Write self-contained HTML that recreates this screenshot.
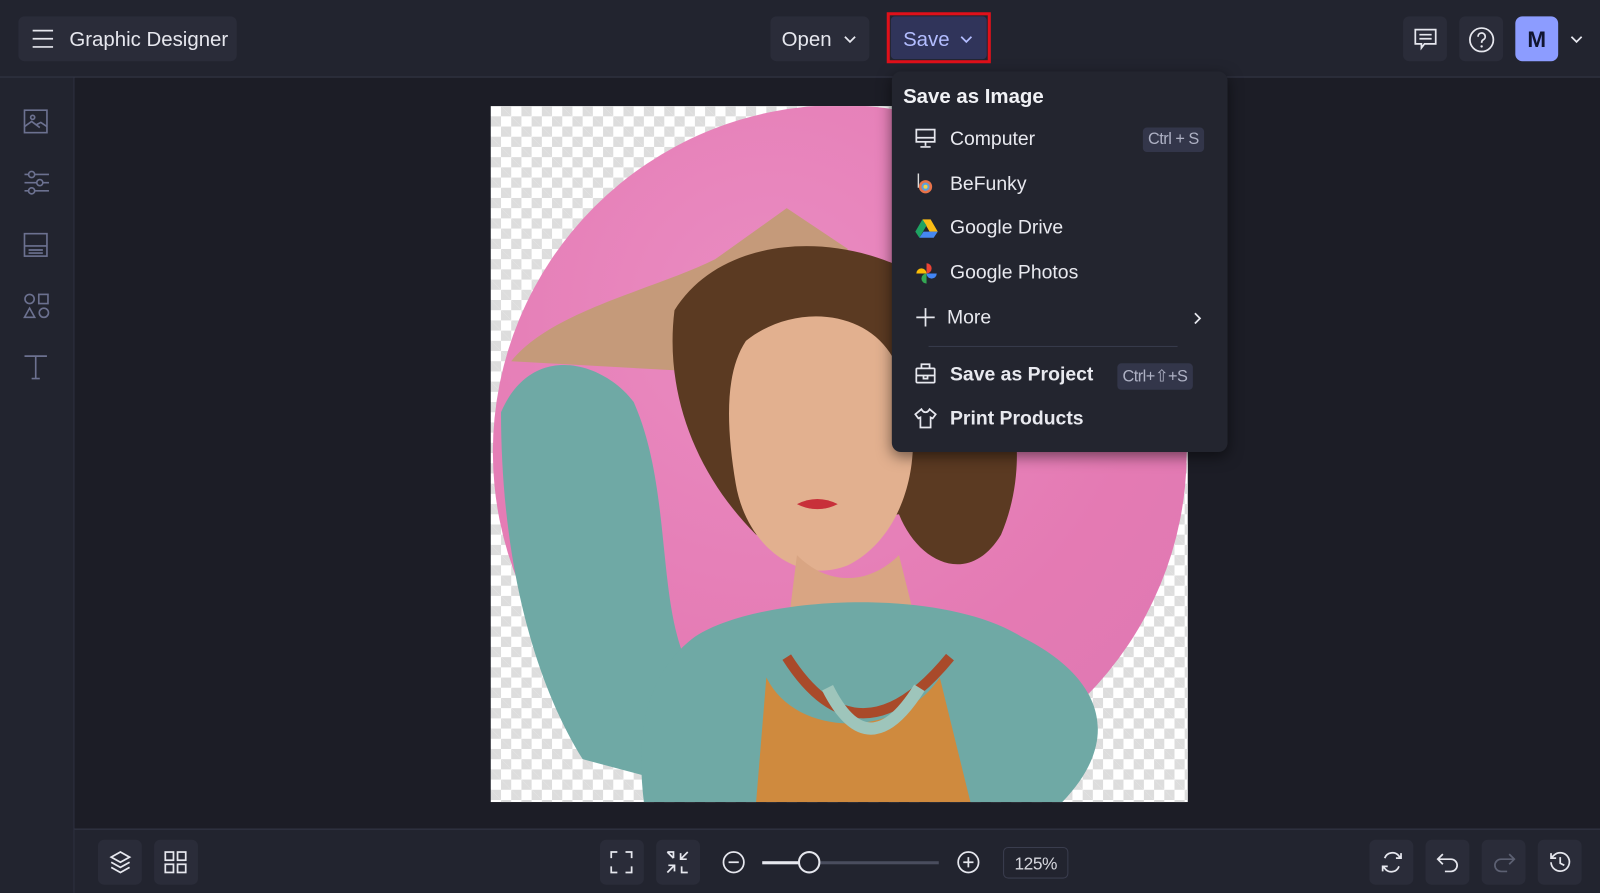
<!DOCTYPE html>
<html><head><meta charset="utf-8"><style>
*{box-sizing:border-box;margin:0;padding:0}
html,body{width:1600px;height:893px;overflow:hidden;background:#1c1d26;font-family:"Liberation Sans",sans-serif}
#w{position:absolute;left:0;top:0;width:1568px;height:875px;transform:scale(1.02041);transform-origin:0 0;background:#1c1d26}
.a{position:absolute}
.btn{position:absolute;background:#2a2c39;border-radius:6px}
svg{position:absolute}
.ic{stroke:#6c7190;fill:none;stroke-width:1.6}
.wi{stroke:#e6e7ee;fill:none;stroke-width:1.7}
.mi{position:absolute;left:57px;color:#e8e9ef;font-size:19px}
.kbd{position:absolute;background:#33364a;color:#aeb1c4;font-size:16px;border-radius:4px;padding:3px 5px;letter-spacing:-0.5px}
</style></head><body><div id="w">
<div class="a" style="left:0;top:0;width:1568px;height:76px;background:#22242f;border-bottom:1px solid #353848"></div>
<div class="a" style="left:0;top:76px;width:73px;height:799px;background:#22242f;border-right:1px solid #2e3140"></div>
<div class="a" style="left:73px;top:812px;width:1495px;height:63px;background:#22242f;border-top:1px solid #353848"></div>

<div class="btn" style="left:18px;top:16px;width:214px;height:44px"></div>
<svg style="left:30px;top:28px" width="24" height="20"><path class="wi" d="M2 2h20M2 10h20M2 18h20"/></svg>
<div class="a" style="left:68px;top:28px;color:#e6e7ee;font-size:20px">Graphic Designer</div>

<div class="btn" style="left:755px;top:16px;width:97px;height:44px"></div>
<div class="a" style="left:766px;top:28px;color:#e6e7ee;font-size:20px">Open</div>
<svg style="left:826px;top:34px" width="14" height="10"><path class="wi" d="M2 2l5 5 5-5"/></svg>
<div class="a" style="left:869px;top:12px;width:102px;height:50px;border:3px solid #e0101a;background:#22242f"></div>
<div class="a" style="left:873px;top:16px;width:94px;height:42px;background:#30345a;border-radius:4px"></div>
<div class="a" style="left:885px;top:28px;color:#b3bdff;font-size:20px">Save</div>
<svg style="left:940px;top:34px" width="14" height="10"><path stroke="#b3bdff" fill="none" stroke-width="1.7" d="M2 2l5 5 5-5"/></svg>

<div class="btn" style="left:1375px;top:16px;width:43px;height:44px"></div>
<svg style="left:1384px;top:26px" width="26" height="26"><path class="wi" d="M3 3h20v14H12l-3 4v-4H3z M7 8h12M7 12h12"/></svg>
<div class="btn" style="left:1430px;top:16px;width:43px;height:44px"></div>
<svg style="left:1438px;top:25px" width="28" height="28"><circle class="wi" cx="14" cy="14" r="11.5"/><path class="wi" d="M10.5 11a3.5 3.5 0 1 1 5 3c-1.3.7-1.5 1.4-1.5 3"/><circle cx="14" cy="20.5" r="1.2" fill="#e6e7ee"/></svg>
<div class="a" style="left:1485px;top:16px;width:42px;height:44px;background:#8c9cff;border-radius:7px;color:#111530;font-size:22px;text-align:center;line-height:46px;font-weight:bold">M</div>
<svg style="left:1538px;top:34px" width="14" height="10"><path class="wi" d="M2 2l5 5 5-5"/></svg>

<svg style="left:22px;top:106px" width="26" height="26"><rect class="ic" x="2" y="2" width="22" height="22"/><circle class="ic" cx="10" cy="9" r="2"/><path class="ic" d="M2 18l7-5 8 6M14 16l4-2 6 4"/></svg>
<svg style="left:22px;top:166px" width="26" height="26"><path class="ic" d="M2 5h24M2 13h24M2 21h24"/><circle cx="9" cy="5" r="3" fill="#22242f" stroke="#6c7190" stroke-width="1.6"/><circle cx="17" cy="13" r="3" fill="#22242f" stroke="#6c7190" stroke-width="1.6"/><circle cx="9" cy="21" r="3" fill="#22242f" stroke="#6c7190" stroke-width="1.6"/></svg>
<svg style="left:22px;top:227px" width="26" height="26"><rect class="ic" x="2" y="2" width="22" height="22"/><path class="ic" d="M2 14h22M6 18h14M6 21h14"/></svg>
<svg style="left:22px;top:286px" width="28" height="28"><circle class="ic" cx="7" cy="7" r="4.5"/><rect class="ic" x="16" y="2.5" width="9" height="9"/><path class="ic" d="M7 16l5 9H2z"/><circle class="ic" cx="21" cy="20.5" r="4.5"/></svg>
<svg style="left:22px;top:346px" width="28" height="28"><path class="ic" d="M2 3h22M13 3v22M9 25h8"/></svg>

<div class="a" style="left:481px;top:104px;width:683px;height:682px;overflow:hidden;background-color:#fff;background-image:linear-gradient(45deg,#ddd 25%,transparent 25%,transparent 75%,#ddd 75%),linear-gradient(45deg,#ddd 25%,transparent 25%,transparent 75%,#ddd 75%);background-size:20px 20px;background-position:0 0,10px 10px">
 <div class="a" style="left:2px;top:-1px;width:680px;height:680px;border-radius:50%;background:radial-gradient(circle at 40% 30%,#ea8cc2,#e47ab3 60%,#dc78b3)"></div>
 <svg class="a" style="left:0;top:0" width="683" height="682">
  <path d="M20 250 C60 200 160 180 220 150 L290 100 L350 140 L300 230 L200 260 Z" fill="#c59a7a"/>
  <path d="M10 300 C40 230 110 250 140 290 C180 380 160 500 200 560 L240 680 L90 640 C40 560 10 440 10 300Z" fill="#6fa9a5"/>
  <path d="M180 200 C230 120 360 120 440 180 C520 250 530 350 500 420 C470 470 420 450 400 400 L260 420 C200 360 170 280 180 200Z" fill="#5b3a22"/>
  <path d="M250 230 C300 190 380 200 400 260 C430 330 410 420 350 450 C300 470 250 430 240 370 C230 310 230 260 250 230Z" fill="#e2b08f"/>
  <path d="M300 390 Q320 380 340 390 Q320 400 300 390Z" fill="#c8303a"/>
  <path d="M300 440 C330 470 370 470 400 440 L420 520 C390 560 320 560 290 520Z" fill="#d9a583"/>
  <path d="M200 520 C260 480 440 470 520 520 C600 560 620 620 560 682 L150 682 C140 600 160 550 200 520Z" fill="#6fa9a5"/>
  <path d="M270 560 C300 620 400 620 440 560 L470 682 L260 682Z" fill="#cf8a3e"/>
  <path d="M290 540 Q360 650 450 540" stroke="#a94a2a" stroke-width="10" fill="none"/>
  <path d="M330 570 Q370 650 420 570" stroke="#9ec5bb" stroke-width="12" fill="none"/>
 </svg>
</div>

<div class="a" style="left:874px;top:70px;width:329px;height:373px;background:#23252f;border-radius:9px;box-shadow:0 4px 14px rgba(0,0,0,.5)">
 <div class="a" style="left:11px;top:14px;color:#f0f1f5;font-size:20px;font-weight:bold">Save as Image</div>
 <svg style="left:22px;top:55px" width="22" height="22"><rect class="wi" x="2" y="2" width="18" height="12"/><path class="wi" d="M2 10h18M11 14v4M6 19h10"/></svg>
 <div class="mi" style="top:56px">Computer</div><div class="kbd" style="left:246px;top:55px">Ctrl + S</div>
 <svg style="left:22px;top:98px" width="22" height="24"><path stroke="#ddd" stroke-width="1.4" fill="none" d="M4 2v14"/><circle cx="11" cy="15" r="6.5" fill="#e8734a"/><circle cx="11" cy="15" r="4" fill="#5aa0e0"/><circle cx="11" cy="15" r="2" fill="#f3d24a"/></svg>
 <div class="mi" style="top:100px">BeFunky</div>
 <svg style="left:22px;top:143px" width="24" height="22"><path d="M8 2h8l7 12h-8z" fill="#f9bc15"/><path d="M8 2L1 14l4 6 7-12z" fill="#1ea362"/><path d="M5 20h14l4-6H9z" fill="#4688f1"/></svg>
 <div class="mi" style="top:143px">Google Drive</div>
 <svg style="left:22px;top:186px" width="24" height="24"><path d="M12 12V2a5 5 0 0 1 0 10z" fill="#ea4335"/><path d="M12 12h10a5 5 0 0 1-10 0z" fill="#4285f4"/><path d="M12 12v10a5 5 0 0 1 0-10z" fill="#34a853"/><path d="M12 12H2a5 5 0 0 1 10 0z" fill="#fbbc05"/></svg>
 <div class="mi" style="top:187px">Google Photos</div>
 <svg style="left:22px;top:230px" width="22" height="22"><path class="wi" d="M11 2v18M2 11h18"/></svg>
 <div class="mi" style="top:231px;left:54px">More</div>
 <svg style="left:295px;top:235px" width="10" height="14"><path class="wi" d="M2 2l5 5-5 5"/></svg>
 <div class="a" style="left:36px;top:269px;width:244px;height:1px;background:#383b4c"></div>
 <svg style="left:22px;top:285px" width="22" height="22"><rect class="wi" x="2" y="6" width="18" height="14" rx="1"/><path class="wi" d="M7 6V2h8v4M2 13h18M9 13v3h4v-3"/></svg>
 <div class="mi" style="top:287px;font-weight:bold">Save as Project</div><div class="kbd" style="left:221px;top:286px">Ctrl+⇧+S</div>
 <svg style="left:21px;top:329px" width="24" height="22"><path class="wi" d="M8 2L2 7l3 4 2-1v10h10V10l2 1 3-4-6-5c-1 2-2 3-4 3S9 4 8 2z"/></svg>
 <div class="mi" style="top:330px;font-weight:bold">Print Products</div>
</div>

<div class="btn" style="left:96px;top:823px;width:43px;height:44px"></div>
<svg style="left:105px;top:832px" width="26" height="26"><path class="wi" d="M13 3l9 5-9 5-9-5z M4 13l9 5 9-5M4 18l9 5 9-5"/></svg>
<div class="btn" style="left:151px;top:823px;width:43px;height:44px"></div>
<svg style="left:160px;top:833px" width="24" height="24"><rect class="wi" x="2" y="2" width="8" height="8"/><rect class="wi" x="14" y="2" width="8" height="8"/><rect class="wi" x="2" y="14" width="8" height="8"/><rect class="wi" x="14" y="14" width="8" height="8"/></svg>
<div class="btn" style="left:588px;top:823px;width:43px;height:44px"></div>
<svg style="left:597px;top:833px" width="24" height="24"><path class="wi" d="M2 8V2h6M16 2h6v6M22 16v6h-6M8 22H2v-6"/></svg>
<div class="btn" style="left:643px;top:823px;width:43px;height:44px"></div>
<svg style="left:652px;top:833px" width="24" height="24"><path class="wi" d="M2 2h6v6M2 2l6 6M22 2l-7 7M15 3v6h6M2 22l7-7M3 15h6v6M22 22h-6v-6"/></svg>
<svg style="left:707px;top:833px" width="24" height="24"><circle class="wi" cx="12" cy="12" r="10"/><path class="wi" d="M7 12h10"/></svg>
<div class="a" style="left:747px;top:844px;width:173px;height:3px;background:#4a4d5e"></div>
<div class="a" style="left:747px;top:844px;width:46px;height:3px;background:#e6e7ee"></div>
<div class="a" style="left:782px;top:834px;width:22px;height:22px;border-radius:50%;border:2px solid #e6e7ee;background:#22242f"></div>
<svg style="left:937px;top:833px" width="24" height="24"><circle class="wi" cx="12" cy="12" r="10"/><path class="wi" d="M7 12h10M12 7v10"/></svg>
<div class="a" style="left:983px;top:830px;width:64px;height:31px;border:1px solid #3a3d4e;border-radius:5px;color:#d6d7de;font-size:17px;text-align:center;line-height:31px;letter-spacing:-0.5px">125%</div>
<div class="btn" style="left:1342px;top:823px;width:43px;height:44px"></div>
<svg style="left:1351px;top:833px" width="26" height="24"><path class="wi" d="M6 8a8 8 0 0 1 14-2l2 2M20 16a8 8 0 0 1-14 2l-2-2M22 3v5h-5M4 21v-5h5"/></svg>
<div class="btn" style="left:1397px;top:823px;width:43px;height:44px"></div>
<svg style="left:1406px;top:833px" width="26" height="24"><path class="wi" d="M8 4L3 9l5 5M3 9h13a6 6 0 0 1 0 12h-6"/></svg>
<div class="btn" style="left:1452px;top:823px;width:43px;height:44px"></div>
<svg style="left:1461px;top:833px" width="26" height="24"><path stroke="#5c6072" fill="none" stroke-width="1.7" d="M18 4l5 5-5 5M23 9H10a6 6 0 0 0 0 12h6"/></svg>
<div class="btn" style="left:1507px;top:823px;width:43px;height:44px"></div>
<svg style="left:1516px;top:833px" width="26" height="24"><path class="wi" d="M4 12a9 9 0 1 0 3-7L4 8M4 3v5h5M13 7v6l4 2"/></svg>
</div></body></html>
